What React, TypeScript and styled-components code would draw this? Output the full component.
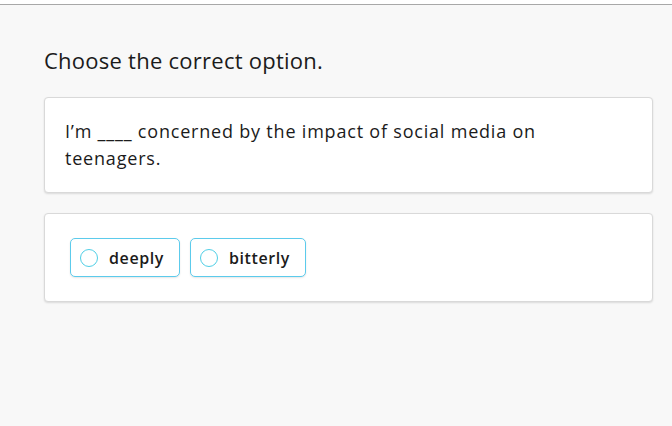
import styled, { createGlobalStyle } from "styled-components";

const GlobalStyle = createGlobalStyle`
  html, body {
    margin: 0;
    padding: 0;
    background: #f8f8f8;
    font-family: "Open Sans", "Liberation Sans", sans-serif;
    color: #1b1b1b;
  }
`;

const Page = styled.div`
  min-height: 426px;
  background: #f8f8f8;
`;

const TopBar = styled.div`
  height: 4px;
  background: #ffffff;
  border-bottom: 1px solid #a8a8a8;
`;

const Content = styled.main`
  padding: 40px 19px 0 44px;
  display: flex;
  flex-direction: column;
`;

const Title = styled.h1`
  margin: 0 0 22px;
  font-size: 22px;
  font-weight: 400;
  line-height: 30px;
  letter-spacing: 0.25px;
`;

const Card = styled.section<{ $padding: string }>`
  background: #ffffff;
  border: 1px solid #d9d9d9;
  border-radius: 4px;
  box-shadow: 0 1px 2px rgba(0, 0, 0, 0.12);
  padding: ${(props) => props.$padding};
  margin-bottom: 20px;
`;

const Prompt = styled.p`
  margin: 0;
  max-width: 500px;
  font-size: 18px;
  line-height: 27px;
  letter-spacing: 0.8px;
`;

const Options = styled.div`
  display: flex;
  gap: 10px;
`;

const OptionButton = styled.button`
  display: flex;
  align-items: center;
  gap: 11px;
  height: 39px;
  padding: 0 15px 0 9px;
  background: #ffffff;
  border: 1px solid #5ccbec;
  border-radius: 5px;
  box-shadow: 0 1px 2px rgba(0, 0, 0, 0.1);
  font-family: "Open Sans", "Liberation Sans", sans-serif;
  font-size: 16px;
  font-weight: 600;
  letter-spacing: 0.6px;
  color: #1b1b1b;
  cursor: pointer;
`;

const Radio = styled.span`
  width: 18px;
  height: 18px;
  border-radius: 50%;
  border: 1.5px solid #50cfe6;
  box-sizing: border-box;
  flex-shrink: 0;
`;

const options = ["deeply", "bitterly"];

export default function App() {
  return (
    <Page>
      <GlobalStyle />
      <TopBar />
      <Content>
        <Title>Choose the correct option.</Title>
        <Card $padding="20px 20px">
          <Prompt>I’m ____ concerned by the impact of social media on teenagers.</Prompt>
        </Card>
        <Card $padding="24px 25px">
          <Options>
            {options.map((label) => (
              <OptionButton key={label}>
                <Radio />
                {label}
              </OptionButton>
            ))}
          </Options>
        </Card>
      </Content>
    </Page>
  );
}
